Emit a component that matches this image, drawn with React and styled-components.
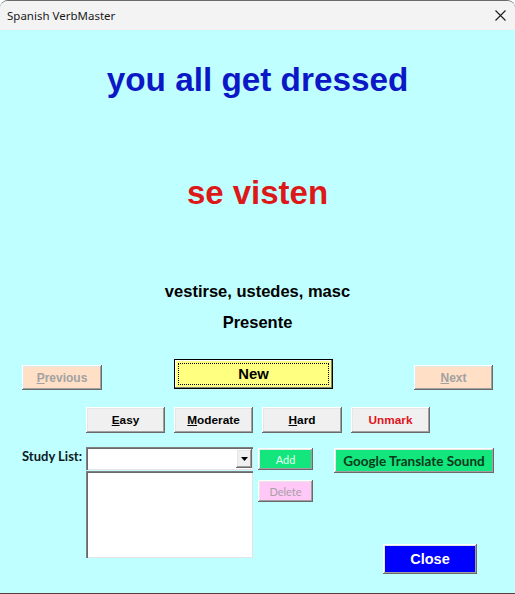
import React from 'react';
import styled, { createGlobalStyle } from 'styled-components';

const Global = createGlobalStyle`
  html, body { margin: 0; padding: 0; background: #ffffff; }
  body { font-family: "Liberation Sans", Arial, sans-serif; }
`;

const Window = styled.div`
  width: 515px;
  height: 594px;
  box-sizing: border-box;
  display: flex;
  flex-direction: column;
  border-radius: 8px 8px 0 0;
  overflow: hidden;
  border-top: 1px solid #6a6a6a;
  border-bottom: 1px solid #5e3a3a;
  background: #c0ffff;
`;

const TitleBar = styled.div`
  flex: none;
  height: 29px;
  background: #f3f3f3;
  display: flex;
  align-items: center;
  justify-content: space-between;
  padding: 0 9px 0 7px;
  font-family: "Noto Sans", "Open Sans", sans-serif;
  font-size: 11.5px;
  color: #1a1a1a;
`;

const Content = styled.div`
  flex: 1;
  display: flex;
  flex-direction: column;
`;

const Line = styled.div`
  text-align: center;
  white-space: nowrap;
  font-family: "Liberation Sans", Arial, sans-serif;
  font-size: ${p => p.$size}px;
  font-weight: ${p => (p.$bold ? 700 : 400)};
  line-height: ${p => p.$lh}px;
  color: ${p => p.$color};
  margin-top: ${p => p.$mt}px;
`;

const NavRow = styled.div`
  display: flex;
  align-items: flex-start;
  padding-left: 22px;
  margin-top: 27px;
  height: 31px;
`;

const DiffRow = styled.div`
  display: flex;
  gap: 9px;
  padding-left: 86px;
  margin-top: 17px;
`;

const BottomArea = styled.div`
  display: flex;
  align-items: flex-start;
  padding-left: 22px;
  margin-top: 14px;
`;

const raised = `
  box-shadow: inset -1px -1px 0 #6a6a6a, inset 1px 1px 0 #ffffff,
    inset -2px -2px 0 #a0a0a0, inset 2px 2px 0 #e6e6e6;
`;

const Btn = styled.button`
  box-sizing: border-box;
  border: none;
  padding: 0;
  margin: 0;
  display: flex;
  align-items: center;
  justify-content: center;
  font-family: "Liberation Sans", Arial, sans-serif;
  font-weight: 700;
  font-size: ${p => p.$size || 12}px;
  width: ${p => p.$w}px;
  height: ${p => p.$h}px;
  margin-left: ${p => p.$ml || 0}px;
  margin-top: ${p => p.$mt || 0}px;
  background: ${p => p.$bg};
  color: ${p => p.$color || '#000'};
  ${raised}
  cursor: default;
  u { text-decoration-thickness: 1px; text-underline-offset: 1px; }
`;

const NewBtn = styled(Btn)`
  position: relative;
  border: 1px solid #000;
  box-shadow: inset -1px -1px 0 #808080, inset 1px 1px 0 #ffffff;
  &::after {
    content: '';
    position: absolute;
    inset: 3px;
    border: 1px dotted #000;
  }
`;

const CalibriBtn = styled(Btn)`
  font-family: Lato, "Open Sans", sans-serif;
  font-weight: ${p => (p.$light ? 400 : 700)};
`;

const Label = styled.div`
  width: 64px;
  flex: none;
  padding-top: 1px;
  font-family: Lato, "Open Sans", sans-serif;
  font-weight: 700;
  font-size: 13px;
  color: #0d1a24;
  white-space: nowrap;
`;

const ListCol = styled.div`
  display: flex;
  flex-direction: column;
  gap: 1px;
  width: 167px;
  flex: none;
`;

const sunken = `
  box-sizing: border-box;
  background: #ffffff;
  box-shadow: inset 1px 1px 0 #808080, inset 2px 2px 0 #696969,
    inset -1px -1px 0 #e4e4e4;
`;

const Combo = styled.div`
  ${sunken}
  height: 23px;
  display: flex;
  justify-content: flex-end;
  padding: 2px 1px 2px 2px;
`;

const DropBtn = styled.div`
  width: 16px;
  height: 19px;
  background: #f0f0f0;
  display: flex;
  align-items: center;
  justify-content: center;
  ${raised}
`;

const ListBox = styled.div`
  ${sunken}
  height: 87px;
`;

const SmallCol = styled.div`
  display: flex;
  flex-direction: column;
  margin-left: 5px;
  width: 55px;
  flex: none;
`;

const RightCol = styled.div`
  display: flex;
  flex-direction: column;
  margin-left: 21px;
  width: 160px;
  flex: none;
`;

export default function App() {
  return (
    <>
      <Global />
      <Window>
        <TitleBar>
          <span>Spanish VerbMaster</span>
          <svg width="11" height="11" viewBox="0 0 11 11">
            <path d="M0.5 0.5 L10.5 10.5 M10.5 0.5 L0.5 10.5" stroke="#1a1a1a" strokeWidth="1.1" />
          </svg>
        </TitleBar>
        <Content>
          <Line $size={33.3} $bold $lh={40} $mt={30} $color="#0c18c6">you all get dressed</Line>
          <Line $size={33} $bold $lh={40} $mt={73} $color="#dc1818">se visten</Line>
          <Line $size={16.5} $bold $lh={20} $mt={68} $color="#000">vestirse, ustedes, masc</Line>
          <Line $size={16.5} $bold $lh={20} $mt={11} $color="#000">Presente</Line>

          <NavRow>
            <Btn $w={80} $h={25} $mt={6} $bg="#ffdfc6" $color="#a2a2a2"><span><u>P</u>revious</span></Btn>
            <NewBtn $w={159} $h={30} $ml={72} $bg="#ffff80" $size={14.8}>New</NewBtn>
            <Btn $w={79} $h={25} $ml={81} $mt={6} $bg="#ffdfc6" $color="#a2a2a2"><span><u>N</u>ext</span></Btn>
          </NavRow>

          <DiffRow>
            <Btn $w={79} $h={26} $bg="#f0f0f0" $size={11.8}><span><u>E</u>asy</span></Btn>
            <Btn $w={79} $h={26} $bg="#f0f0f0" $size={11.8}><span><u>M</u>oderate</span></Btn>
            <Btn $w={80} $h={26} $bg="#f0f0f0" $size={11.8}><span><u>H</u>ard</span></Btn>
            <Btn $w={79} $h={26} $bg="#f0f0f0" $size={11.8} $color="#e01420">Unmark</Btn>
          </DiffRow>

          <BottomArea>
            <Label>Study List:</Label>
            <ListCol>
              <Combo>
                <DropBtn>
                  <svg width="7" height="4" viewBox="0 0 7 4">
                    <path d="M0 0 H7 L3.5 4 Z" fill="#000" />
                  </svg>
                </DropBtn>
              </Combo>
              <ListBox />
            </ListCol>
            <SmallCol>
              <CalibriBtn $light $w={55} $h={22} $mt={1} $bg="#12e67c" $color="#e6fff0" $size={11}>Add</CalibriBtn>
              <CalibriBtn $light $w={55} $h={22} $mt={10} $bg="#ffc8f6" $color="#a8a0a8" $size={11}>Delete</CalibriBtn>
            </SmallCol>
            <RightCol>
              <CalibriBtn $w={160} $h={25} $mt={1} $bg="#12e67c" $color="#0a3a1a" $size={13.5}>Google Translate Sound</CalibriBtn>
              <Btn $w={94} $h={30} $ml={49} $mt={71} $bg="#0000ff" $color="#ffffff" $size={14.5}>Close</Btn>
            </RightCol>
          </BottomArea>
        </Content>
      </Window>
    </>
  );
}
